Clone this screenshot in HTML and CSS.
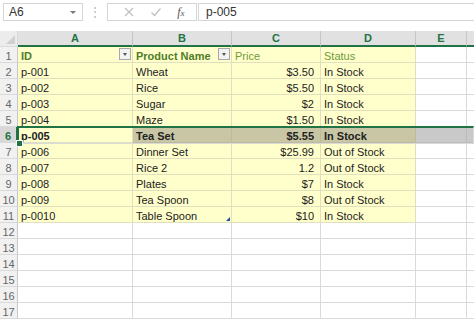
FILE: index.html
```html
<!DOCTYPE html>
<html lang="en">
<head>
    <meta charset="UTF-8">
    <title>Products</title>
    <link rel="stylesheet" href="styles.css">
</head>
<body>
    <div class="formula-bar">
        <div class="name-box"><span>A6</span><span class="caret"></span></div>
        <div class="dots">⋮</div>
        <div class="fx-buttons">
            <svg width="12" height="12" viewBox="0 0 12 12"><path d="M2 2 L10 10 M10 2 L2 10" stroke="#c0c0c0" stroke-width="1.2" fill="none"/></svg>
            <svg width="12" height="12" viewBox="0 0 12 12"><path d="M1.5 6.5 L4.5 9.5 L10.5 2.5" stroke="#c0c0c0" stroke-width="1.3" fill="none"/></svg>
            <i class="fx">f<small>x</small></i>
        </div>
        <div class="formula-input">p-005</div>
    </div>

    <div class="sheet">
        <div class="corner"></div><div class="ch">A</div><div class="ch">B</div><div class="ch">C</div><div class="ch">D</div><div class="ch">E</div><div class="ch"></div>

        <div class="rh">1</div><div class="c y hd">ID<span class="filter"></span></div><div class="c y hd">Product Name<span class="filter"></span></div><div class="c y hl">Price</div><div class="c y hl">Status</div><div class="c"></div><div class="c"></div>
        <div class="rh">2</div><div class="c y">p-001</div><div class="c y">Wheat</div><div class="c y r">$3.50</div><div class="c y">In Stock</div><div class="c"></div><div class="c"></div>
        <div class="rh">3</div><div class="c y">p-002</div><div class="c y">Rice</div><div class="c y r">$5.50</div><div class="c y">In Stock</div><div class="c"></div><div class="c"></div>
        <div class="rh">4</div><div class="c y">p-003</div><div class="c y">Sugar</div><div class="c y r">$2</div><div class="c y">In Stock</div><div class="c"></div><div class="c"></div>
        <div class="rh">5</div><div class="c y">p-004</div><div class="c y">Maze</div><div class="c y r">$1.50</div><div class="c y">In Stock</div><div class="c"></div><div class="c"></div>
        <div class="rh rh-sel">6</div><div class="c y b">p-005</div><div class="c sel b">Tea Set</div><div class="c sel r b">$5.55</div><div class="c sel b">In Stock</div><div class="c sel-g"></div><div class="c sel-g"></div>
        <div class="rh">7</div><div class="c y">p-006</div><div class="c y">Dinner Set</div><div class="c y r">$25.99</div><div class="c y">Out of Stock</div><div class="c"></div><div class="c"></div>
        <div class="rh">8</div><div class="c y">p-007</div><div class="c y">Rice 2</div><div class="c y r">1.2</div><div class="c y">Out of Stock</div><div class="c"></div><div class="c"></div>
        <div class="rh">9</div><div class="c y">p-008</div><div class="c y">Plates</div><div class="c y r">$7</div><div class="c y">In Stock</div><div class="c"></div><div class="c"></div>
        <div class="rh">10</div><div class="c y">p-009</div><div class="c y">Tea Spoon</div><div class="c y r">$8</div><div class="c y">Out of Stock</div><div class="c"></div><div class="c"></div>
        <div class="rh">11</div><div class="c y">p-0010</div><div class="c y end">Table Spoon</div><div class="c y r">$10</div><div class="c y">In Stock</div><div class="c"></div><div class="c"></div>
        <div class="rh">12</div><div class="c"></div><div class="c"></div><div class="c"></div><div class="c"></div><div class="c"></div><div class="c"></div>
        <div class="rh">13</div><div class="c"></div><div class="c"></div><div class="c"></div><div class="c"></div><div class="c"></div><div class="c"></div>
        <div class="rh">14</div><div class="c"></div><div class="c"></div><div class="c"></div><div class="c"></div><div class="c"></div><div class="c"></div>
        <div class="rh">15</div><div class="c"></div><div class="c"></div><div class="c"></div><div class="c"></div><div class="c"></div><div class="c"></div>
        <div class="rh">16</div><div class="c"></div><div class="c"></div><div class="c"></div><div class="c"></div><div class="c"></div><div class="c"></div>
        <div class="rh">17</div><div class="c"></div><div class="c"></div><div class="c"></div><div class="c"></div><div class="c"></div><div class="c"></div>

        <div class="row-outline"><span class="handle"></span></div>
    </div>
</body>
</html>
```

FILE: styles.css
```css
body {
    margin: 0;
    width: 474px;
    height: 320px;
    overflow: hidden;
    background: #fff;
    font-family: 'Liberation Sans', Arial, sans-serif;
    font-size: 11px;
    color: #222;
}

/* formula bar */

.formula-bar {
    display: flex;
    height: 18px;
    padding: 3px 0 0 3px;
    margin-bottom: 10px;
}

.name-box {
    width: 80px;
    box-sizing: border-box;
    border: 1px solid #d6d6d6;
    display: flex;
    justify-content: space-between;
    align-items: center;
    padding: 0 6px 0 5px;
    font-size: 12px;
    color: #333;
}

.caret {
    width: 0;
    height: 0;
    border-left: 3px solid transparent;
    border-right: 3px solid transparent;
    border-top: 3px solid #777;
}

.dots {
    width: 24px;
    text-align: center;
    color: #b5b5b5;
    font-size: 12px;
    line-height: 18px;
}

.fx-buttons {
    width: 90px;
    box-sizing: border-box;
    border: 1px solid #d6d6d6;
    display: flex;
    align-items: center;
    justify-content: space-around;
    padding: 0 4px 0 8px;
}

.fx {
    font-family: 'Liberation Serif', serif;
    font-size: 12px;
    color: #555;
}

.fx small {
    font-size: 9px;
}

.formula-input {
    flex: 1;
    margin-left: 1px;
    border: 1px solid #d6d6d6;
    border-right: none;
    padding-left: 7px;
    font-size: 12px;
    line-height: 16px;
    color: #333;
}

/* grid */

.sheet {
    position: relative;
    display: grid;
    grid-template-columns: 18px 115px 99px 89px 95px 51px 30px;
    grid-auto-rows: 16px;
}

.sheet > div {
    box-sizing: border-box;
    border-right: 1px solid #dadada;
    border-bottom: 1px solid #dadada;
    padding-top: 3px;
    line-height: 13px;
    white-space: nowrap;
}

.corner {
    position: relative;
    background: #ececec;
}

.corner::after {
    content: '';
    position: absolute;
    right: 2px;
    bottom: 2px;
    border-left: 9px solid transparent;
    border-bottom: 9px solid #d0d0d0;
}

.sheet > .ch {
    background: #e1e1e1;
    border-right-color: #c6c6c6;
    border-bottom: 2px solid #217346;
    text-align: center;
    font-weight: bold;
    color: #217346;
    padding-top: 0;
    line-height: 15px;
}

.sheet > .rh {
    background: #f1f1f1;
    border-right-color: #c8c8c8;
    text-align: center;
    color: #666;
}

.sheet > .rh-sel {
    background: #d8d8d8;
    border-right: 2px solid #217346;
    color: #217346;
    font-weight: bold;
}

.c {
    padding: 0 3px;
}

.y {
    background: #ffffcc;
}

.sheet > .y {
    border-color: #e0e0c0;
}

.r {
    text-align: right;
    padding-right: 6px;
}

.b {
    font-weight: bold;
}

.hd {
    position: relative;
    font-weight: bold;
    color: #4f7d2a;
}

.hl {
    color: #6f9a3a;
}

.filter {
    position: absolute;
    right: 1px;
    top: 1px;
    width: 12px;
    height: 12px;
    box-sizing: border-box;
    border: 1px solid #a8a8a8;
    background: #f2f2f2;
}

.filter::after {
    content: '';
    position: absolute;
    left: 3px;
    top: 4px;
    border-left: 2.5px solid transparent;
    border-right: 2.5px solid transparent;
    border-top: 3px solid #555;
}

.sheet > .sel {
    background: #c8c6a4;
    border-color: #bdbb9a;
}

.sheet > .sel-g {
    background: #c9c9c9;
    border-color: #bcbcbc;
}

.end {
    position: relative;
}

.end::after {
    content: '';
    position: absolute;
    right: 1px;
    bottom: 1px;
    border-left: 4px solid transparent;
    border-bottom: 4px solid #1f4e9a;
}

.row-outline {
    position: absolute;
    left: 17px;
    right: 0;
    top: 95px;
    height: 18px;
    box-sizing: border-box;
    border: 2px solid #217346;
    border-right: none;
    pointer-events: none;
}

.handle {
    position: absolute;
    left: -3px;
    bottom: -4px;
    width: 5px;
    height: 5px;
    background: #217346;
    border: 1px solid #fff;
}
```
